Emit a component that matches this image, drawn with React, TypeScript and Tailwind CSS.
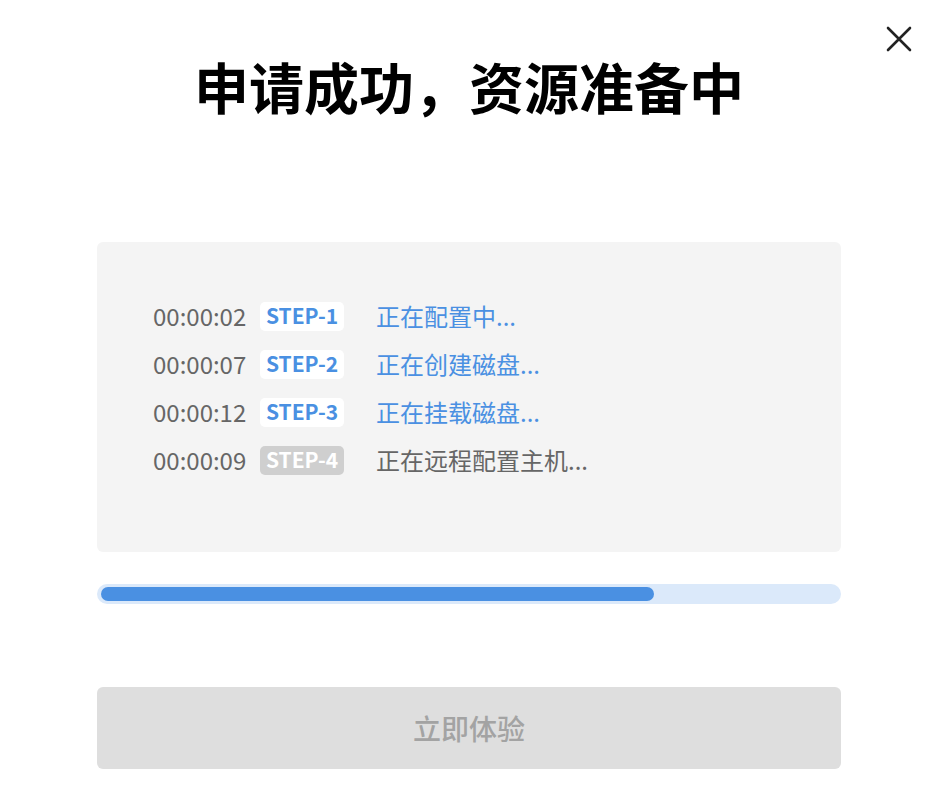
import React from "react";

const steps = [
  { time: "00:00:02", step: "STEP-1", text: "正在配置中...", active: true },
  { time: "00:00:07", step: "STEP-2", text: "正在创建磁盘...", active: true },
  { time: "00:00:12", step: "STEP-3", text: "正在挂载磁盘...", active: true },
  { time: "00:00:09", step: "STEP-4", text: "正在远程配置主机...", active: false },
];

export default function App() {
  return (
    <div
      className="relative w-[942px] h-[811px] bg-white"
      style={{ fontFamily: '"Noto Sans CJK SC", "Noto Sans", sans-serif' }}
    >
      <button className="absolute right-[30px] top-[26px] w-[26px] h-[26px] flex items-center justify-center text-[#222]">
        <svg width="26" height="26" viewBox="0 0 26 26" fill="none" stroke="currentColor" strokeWidth="2.6" strokeLinecap="round">
          <path d="M2 2L24 24M24 2L2 24" />
        </svg>
      </button>
      <div className="flex flex-col pl-[97px] pr-[101px] pt-[47px]">
        <h1 className="text-center text-[55px] leading-[76px] font-bold text-black">
          申请成功，资源准备中
        </h1>
        <div className="mt-[119px] h-[310px] rounded-[6px] bg-[#f4f4f4] pt-[60px] pl-[56px] flex flex-col gap-[20px]">
          {steps.map((s) => (
            <div key={s.step} className="flex items-center h-[28px]">
              <span className="w-[107px] text-[24px] text-[#666]">{s.time}</span>
              <span
                className={
                  s.active
                    ? "w-[84px] h-[29px] rounded-[5px] bg-white text-[#4a90e2] text-[21px] font-bold flex items-center justify-center"
                    : "w-[84px] h-[29px] rounded-[5px] bg-[#cfcfcf] text-white text-[21px] font-bold flex items-center justify-center"
                }
              >
                {s.step}
              </span>
              <span
                className={
                  s.active
                    ? "ml-[32px] text-[24px] text-[#4a90e2]"
                    : "ml-[32px] text-[24px] text-[#666]"
                }
              >
                {s.text}
              </span>
            </div>
          ))}
        </div>
        <div className="mt-[32px] h-[20px] rounded-full bg-[#dbe9fa] py-[3px] px-[4px]">
          <div className="h-full w-[553px] rounded-full bg-[#4a90e2]" />
        </div>
        <button className="mt-[83px] h-[82px] rounded-[6px] bg-[#dedede] text-[28px] text-[#a3a3a3] font-medium">
          立即体验
        </button>
      </div>
    </div>
  );
}
